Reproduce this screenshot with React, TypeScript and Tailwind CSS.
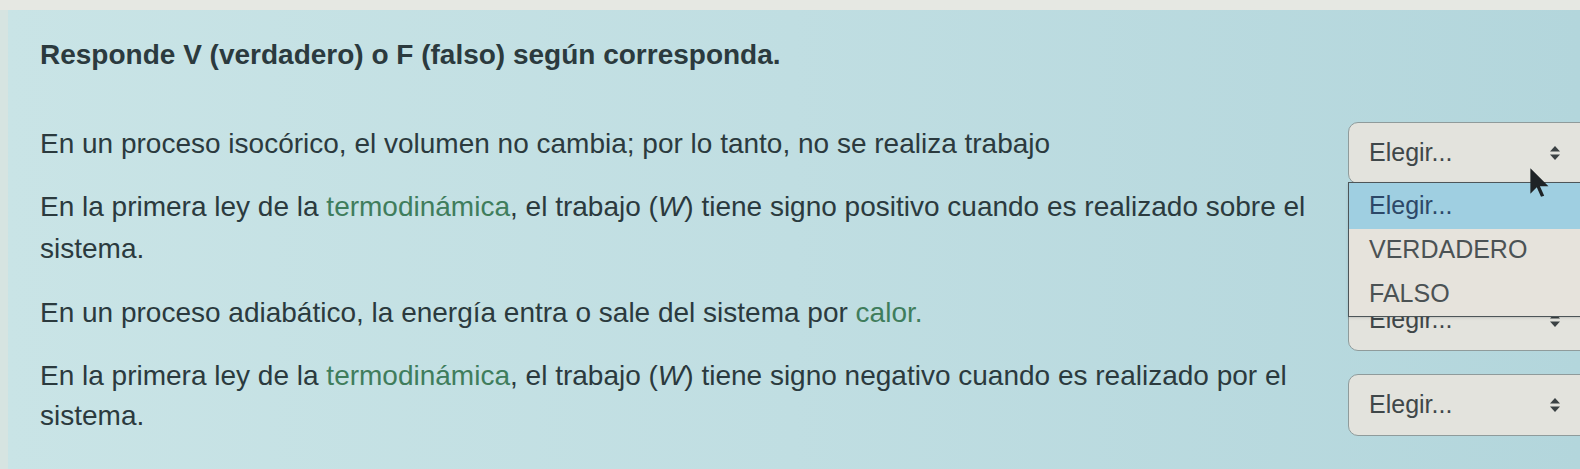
import React from "react";

const font = { fontFamily: '"Liberation Sans", Arial, sans-serif' };

const Arrows: React.FC = () => (
    <svg width="12" height="16" viewBox="0 0 12 16" className="shrink-0">
        <path d="M6 1 L11 6.5 H1 Z" fill="#3b4244" />
        <path d="M6 15 L11 9.5 H1 Z" fill="#3b4244" />
    </svg>
);

const Select: React.FC<{ children?: React.ReactNode }> = ({ children }) => (
    <div className="relative shrink-0 w-[250px] h-[62px] rounded-[10px] border border-[#8f9b9b] bg-[#e3e3dd] flex items-center justify-between pl-[20px] pr-[36px] text-[25px] text-[#3f4749]">
        <span>Elegir...</span>
        <Arrows />
        {children}
    </div>
);

const Green: React.FC<{ children: React.ReactNode }> = ({ children }) => (
    <span className="text-[#3f7d5c]">{children}</span>
);

const Row: React.FC<{ h: string; textCls: string; text: React.ReactNode; select: React.ReactNode }> = ({
    h,
    textCls,
    text,
    select,
}) => (
    <div className={`flex items-center ${h}`}>
        <div className={`w-[1308px] shrink-0 ${textCls}`}>{text}</div>
        {select}
    </div>
);

export default function App() {
    return (
        <div className="w-[1580px] h-[469px] overflow-hidden bg-[#e6e8e3] pt-[10px]" style={font}>
            <div className="h-full pl-[8px] bg-[#d6e4e1]">
                <div className="relative h-full bg-gradient-to-r from-[#c9e4e6] via-[#c0dee2] to-[#b3d6dc] pl-[32px] pt-[25px] text-[28px] text-[#2b3a3e]">
                    <h1 className="font-bold leading-[40px] text-[28px]">
                        Responde V (verdadero) o F (falso) según corresponda.
                    </h1>
                    <div className="mt-[45px] flex flex-col">
                        <Row
                            h="h-[66px]"
                            textCls="pb-[18px] leading-[40px]"
                            text="En un proceso isocórico, el volumen no cambia; por lo tanto, no se realiza trabajo"
                            select={
                                <Select>
                                    <div className="absolute left-[-1px] top-full mt-[-1px] z-10 w-[250px] border-y border-l border-[#4d5558] bg-[#e6e3dc] text-[25px] shadow-sm">
                                        <div className="h-[46px] pl-[20px] flex items-center bg-[#9fcfe1] text-[#2c4868]">
                                            Elegir...
                                        </div>
                                        <div className="h-[42px] pl-[20px] flex items-center text-[#4b5254]">
                                            VERDADERO
                                        </div>
                                        <div className="h-[45px] pl-[20px] flex items-center text-[#4b5254]">
                                            FALSO
                                        </div>
                                    </div>
                                </Select>
                            }
                        />
                        <Row
                            h="h-[102px]"
                            textCls="pb-[18px] leading-[42px]"
                            text={
                                <>
                                    En la primera ley de la <Green>termodinámica</Green>, el trabajo (<i>W</i>) tiene signo
                                    positivo cuando es realizado sobre el sistema.
                                </>
                            }
                            select={<Select />}
                        />
                        <Row
                            h="h-[64px]"
                            textCls="pb-[14px] leading-[40px]"
                            text={
                                <>
                                    En un proceso adiabático, la energía entra o sale del sistema por <Green>calor.</Green>
                                </>
                            }
                            select={<Select />}
                        />
                        <Row
                            h="h-[106px]"
                            textCls="pb-[18px] leading-[40px]"
                            text={
                                <>
                                    En la primera ley de la <Green>termodinámica</Green>, el trabajo (<i>W</i>) tiene signo
                                    negativo cuando es realizado por el sistema.
                                </>
                            }
                            select={<Select />}
                        />
                    </div>
                    {/* mouse pointer */}
                    <svg
                        className="absolute left-[1520px] top-[156px] z-20"
                        width="26"
                        height="34"
                        viewBox="0 0 24 32"
                    >
                        <path d="M2 2 L2 26 L8 20 L12 29 L15 28 L11 19 L19 19 Z" fill="#1e2326" />
                    </svg>
                </div>
            </div>
        </div>
    );
}
